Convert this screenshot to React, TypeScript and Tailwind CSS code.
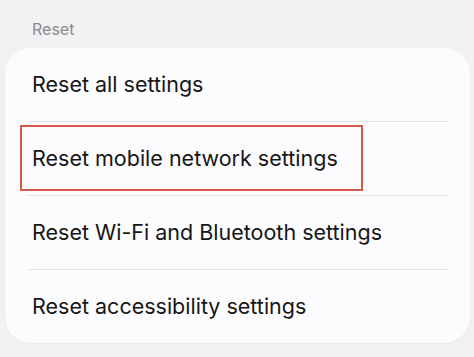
const items = [
  'Reset all settings',
  'Reset mobile network settings',
  'Reset Wi-Fi and Bluetooth settings',
  'Reset accessibility settings',
];

export default function App() {
  return (
    <div
      className="w-[474px] h-[357px] overflow-hidden bg-[#f2f2f4]"
      style={{ fontFamily: "Inter, 'Noto Sans', sans-serif" }}
    >
      {/* Section header */}
      <div className="h-[48px] pl-[32px] pt-[19px] text-[16px] leading-[20px] text-[#8a8a8e]">
        Reset
      </div>

      {/* Card */}
      <div className="ml-[5px] mr-[4px] rounded-[26px] bg-[#fcfcfe] shadow-[0_1px_3px_rgba(0,0,0,0.04)]">
        {items.map((label, i) => (
          <div key={label} className="relative">
            {i > 0 && <div className="mx-[22px] h-px bg-[#e6e6e9]" />}
            <div className="flex h-[73px] items-center pl-[27px] text-[21.5px] text-[#161616]">
              {label}
            </div>
            {i === 1 && (
              <div className="pointer-events-none absolute left-[15px] top-[4px] h-[66px] w-[343px] border-2 border-[#d8574c]" />
            )}
          </div>
        ))}
      </div>
    </div>
  );
}
